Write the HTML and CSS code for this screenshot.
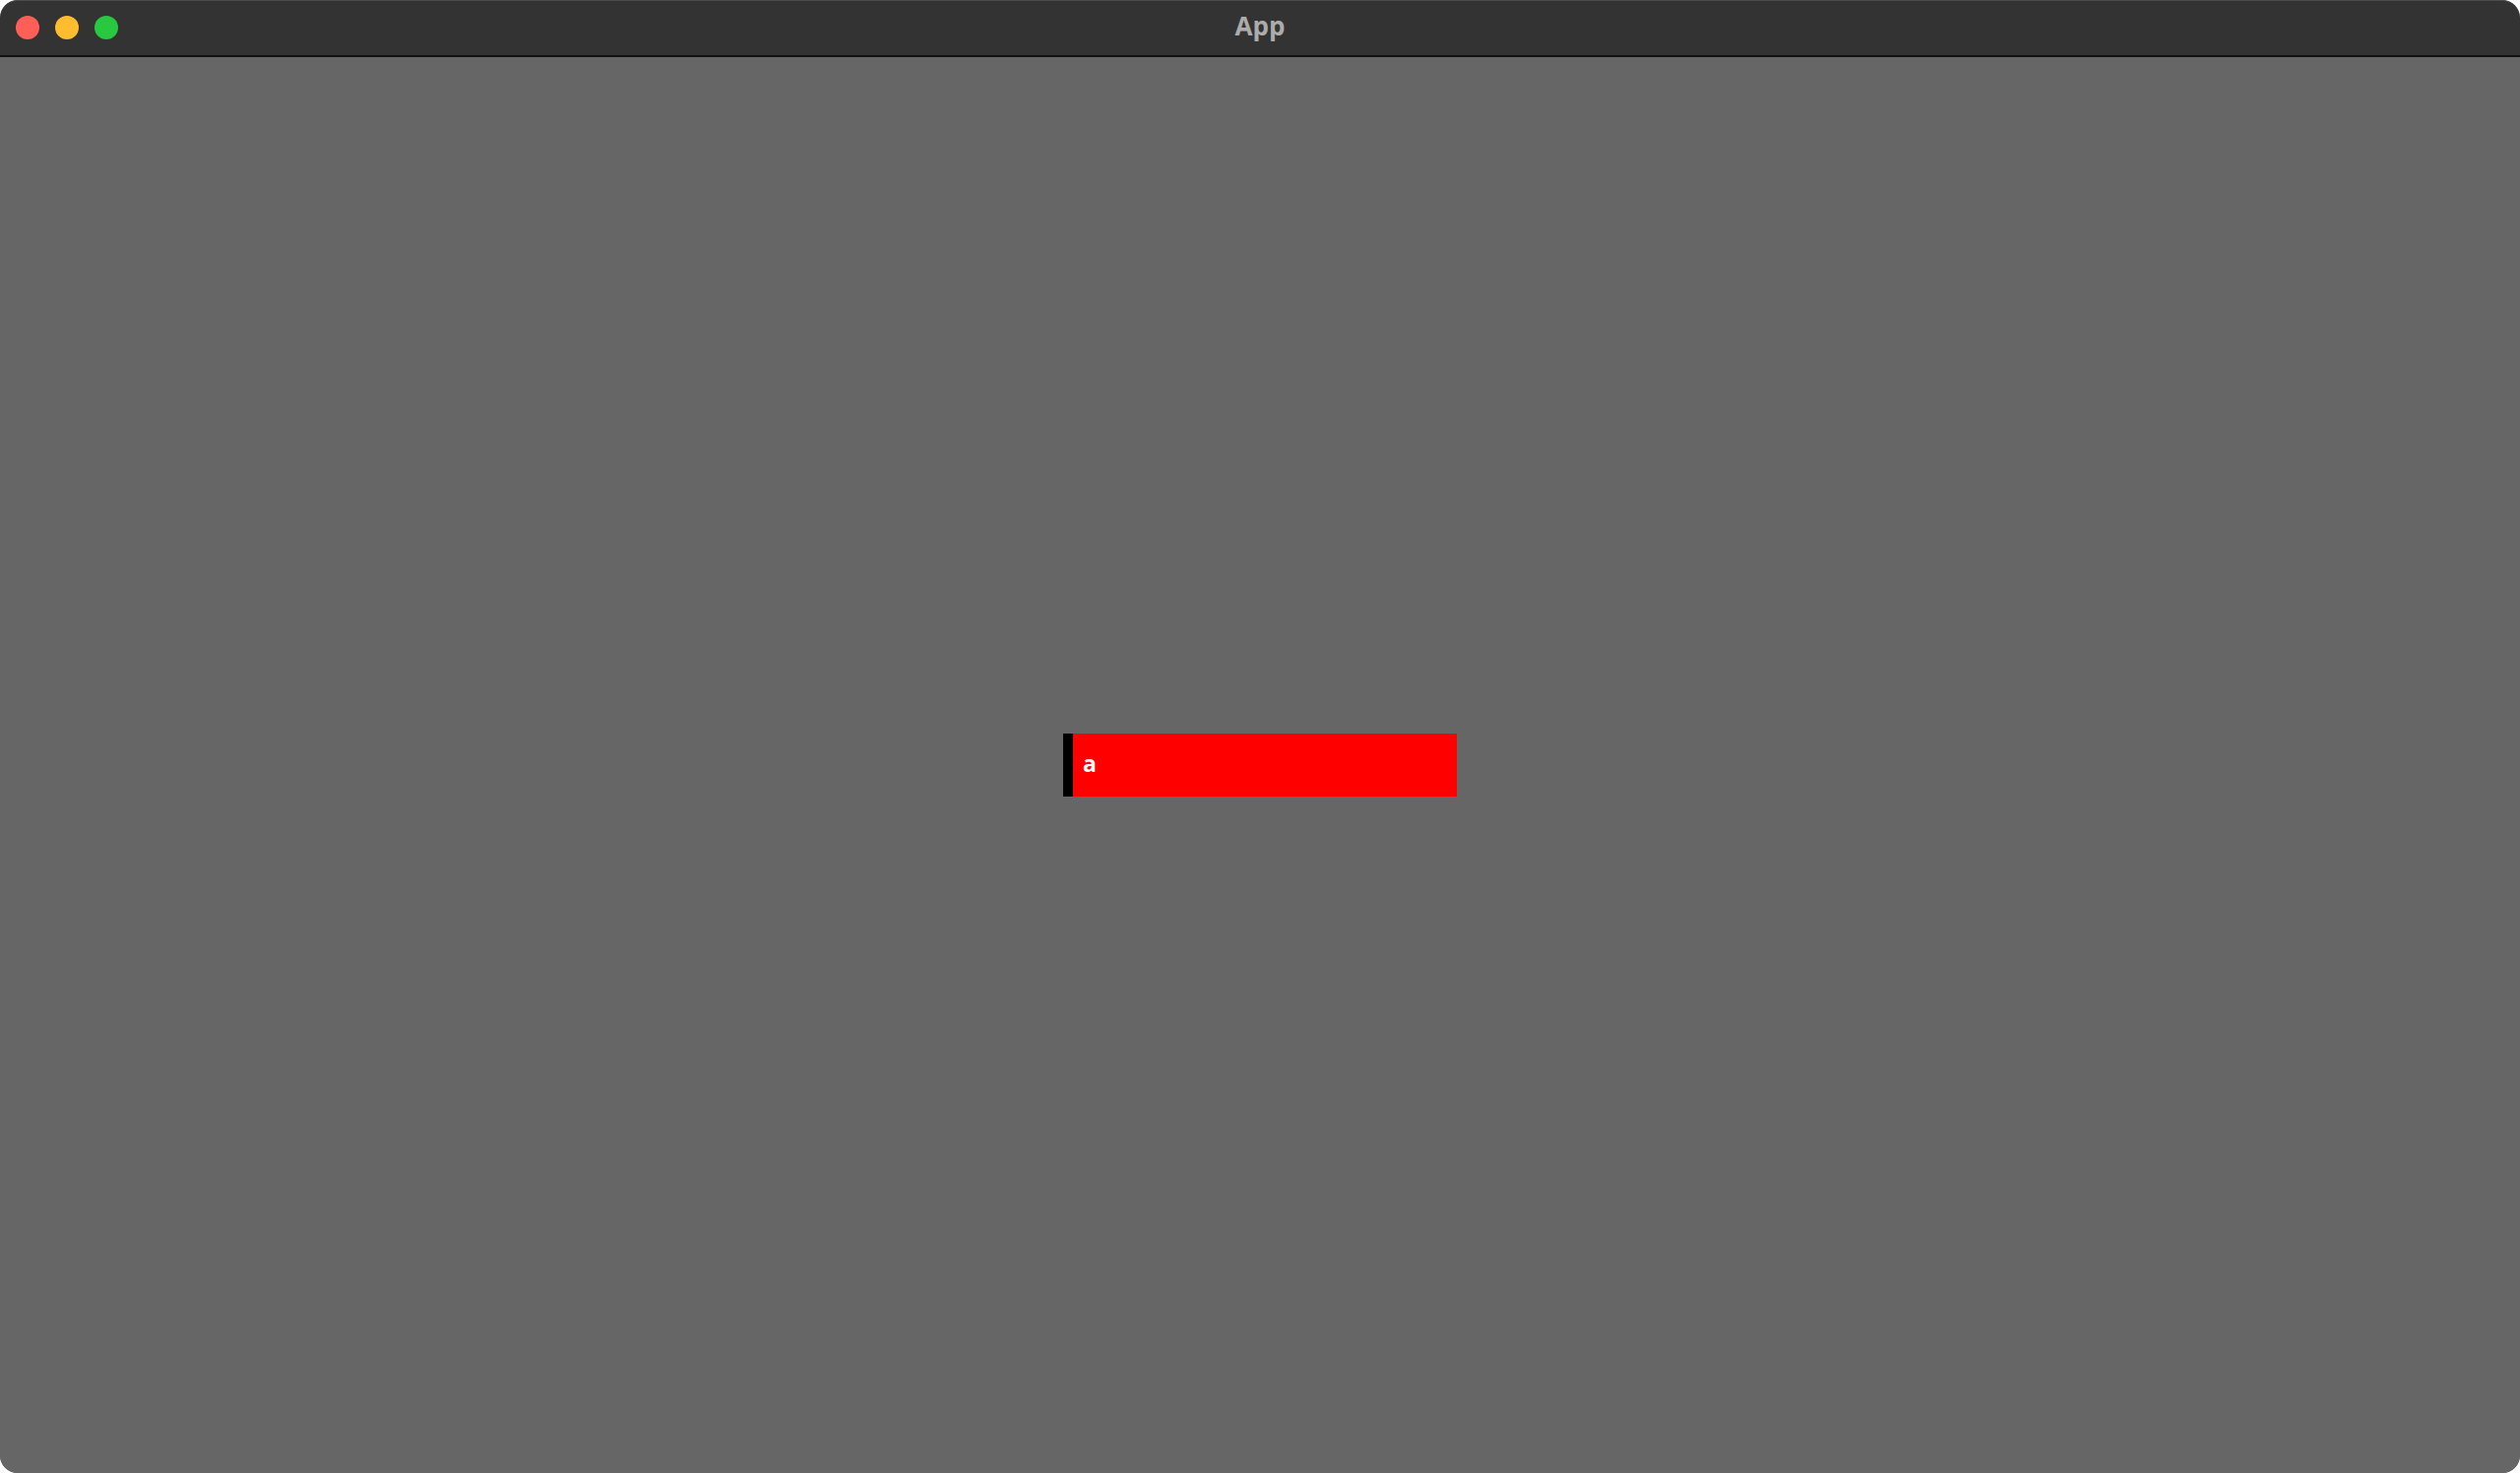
FILE: index.html
```html
<!DOCTYPE html>
<html>
<head>
<meta charset="utf-8">
<title>App</title>
<link rel="stylesheet" href="styles.css">
</head>
<body>
<div class="window">
  <div class="titlebar">
    <div class="lights">
      <span class="light close"></span>
      <span class="light min"></span>
      <span class="light max"></span>
    </div>
    <div class="title">App</div>
  </div>
  <div class="content">
    <div class="item">a</div>
  </div>
</div>
</body>
</html>
```
FILE: styles.css
```css
html, body {
  margin: 0;
  padding: 0;
  background: #ffffff;
}
.window {
  width: 2560px;
  height: 1496px;
  display: flex;
  flex-direction: column;
  border-radius: 18px;
  overflow: hidden;
  background: #666666;
}
.titlebar {
  position: relative;
  flex: none;
  box-sizing: border-box;
  height: 58px;
  background: #333333;
  border-top: 1px solid #4a4a4a;
  border-bottom: 2px solid #111111;
  display: flex;
  align-items: center;
  justify-content: center;
  padding-bottom: 6px;
  border-radius: 18px 18px 0 0;
}
.lights {
  position: absolute;
  left: 16px;
  top: 15px;
  display: flex;
  gap: 16px;
}
.light {
  width: 24px;
  height: 24px;
  border-radius: 50%;
  display: block;
}
.close { background: #ff5f57; }
.min { background: #febc2e; }
.max { background: #28c840; }
.title {
  font-family: "Open Sans", "Noto Sans", sans-serif;
  font-weight: 700;
  font-size: 26px;
  color: #acacac;
  line-height: 1;
}
.content {
  flex: 1;
  display: flex;
  align-items: center;
  justify-content: center;
  background: #666666;
}
.item {
  width: 390px;
  height: 60px;
  padding-bottom: 4px;
  box-sizing: content-box;
  border-left: 10px solid #000000;
  background: #ff0000;
  color: #ffffff;
  font-family: "Open Sans", "Noto Sans", sans-serif;
  font-weight: 700;
  font-size: 23px;
  display: flex;
  align-items: center;
  text-indent: 10px;
}
```
